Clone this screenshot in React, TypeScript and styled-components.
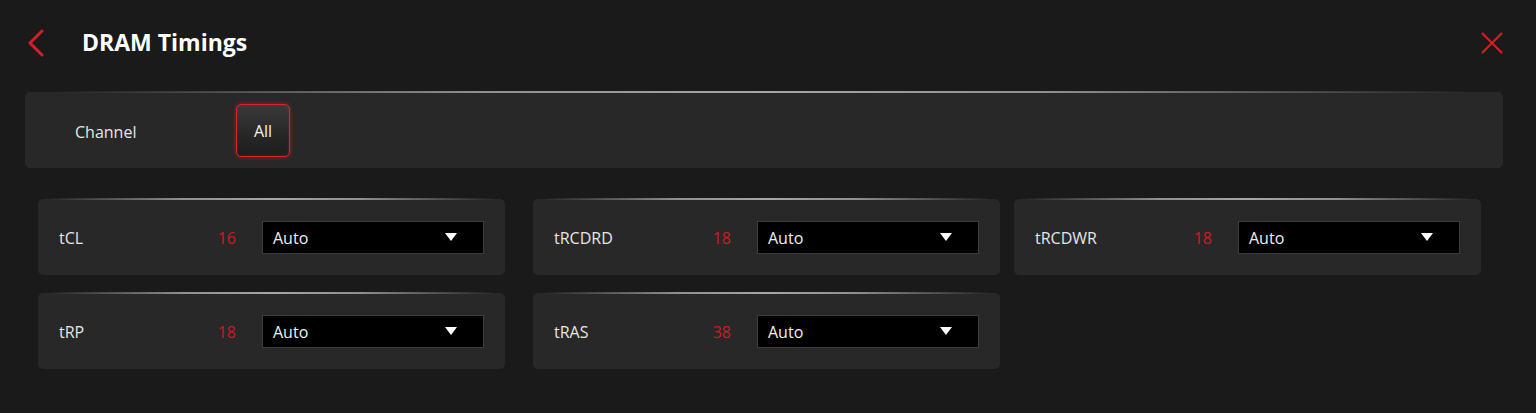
import * as React from "react";
import styled, { createGlobalStyle } from "styled-components";

const GlobalStyle = createGlobalStyle`
	html, body {
		margin: 0;
		padding: 0;
		background: #1a1a1a;
	}
	body {
		font-family: "Open Sans", "Noto Sans", sans-serif;
		color: #ececec;
	}
`;

const timings = [
	[
		{ name: "tCL", value: 16 },
		{ name: "tRCDRD", value: 18 },
		{ name: "tRCDWR", value: 18 },
	],
	[
		{ name: "tRP", value: 18 },
		{ name: "tRAS", value: 38 },
	],
];

const Page = styled.div`
	min-height: 413px;
	background: #1a1a1a;
	display: flex;
	flex-direction: column;
`;

const Header = styled.header`
	height: 86px;
	display: flex;
	align-items: center;
	padding: 0 33px 0 27px;
`;

const IconButton = styled.button`
	background: none;
	border: 0;
	padding: 0;
	display: flex;
	cursor: pointer;
`;

const Title = styled.h1`
	flex: 1;
	margin: 0 0 2px 38px;
	font-size: 23px;
	font-weight: 700;
	color: #fff;
`;

// thin glossy line running across the top edge of a panel
const Panel = styled.section`
	position: relative;
	background: #282828;
	border-radius: 5px;
	display: flex;
	align-items: center;
	&::before {
		content: "";
		position: absolute;
		top: -1px;
		left: 2%;
		right: 2%;
		height: 2px;
		background: linear-gradient(90deg, rgba(150,150,150,0) 0%, rgba(190,190,190,0.7) 30%, rgba(200,200,200,0.8) 50%, rgba(190,190,190,0.7) 70%, rgba(150,150,150,0) 100%);
	}
`;

const ChannelBar = styled(Panel)`
	height: 76px;
	margin: 6px 33px 0 25px;
	padding-left: 50px;
`;

const ChannelLabel = styled.span`
	width: 161px;
	padding-top: 3px;
	font-size: 16px;
	color: #e6e6e6;
`;

const ChannelButton = styled.button<{ $active?: boolean }>`
	width: 54px;
	height: 53px;
	padding-top: 2px;
	border-radius: 5px;
	border: 1px solid ${p => (p.$active ? "#d8252b" : "#444")};
	box-shadow: ${p => (p.$active ? "0 0 4px rgba(220,30,40,0.6), inset 0 0 3px rgba(220,30,40,0.4)" : "none")};
	background: linear-gradient(180deg, #3a3a3a 0%, #262626 60%, #1e1e1e 100%);
	color: #f2f2f2;
	font-family: inherit;
	font-size: 16px;
	cursor: pointer;
`;

const Grid = styled.div`
	margin-top: 31px;
	padding-left: 38px;
	display: grid;
	grid-template-columns: 495px 481px 466px;
	row-gap: 18px;
`;

const Card = styled(Panel)`
	width: 467px;
	height: 76px;
	padding-left: 21px;
	box-sizing: border-box;
`;

const Name = styled.span`
	width: 120px;
	padding-top: 2px;
	font-size: 16px;
	color: #e6e6e6;
`;

const Value = styled.span`
	width: 57px;
	padding-top: 2px;
	text-align: right;
	font-size: 16px;
	color: #c81d22;
`;

const Select = styled.div`
	margin-left: 26px;
	width: 222px;
	height: 33px;
	box-sizing: border-box;
	background: #000;
	border: 1px solid #3c3c3c;
	display: flex;
	align-items: center;
	justify-content: space-between;
	padding: 2px 26px 0 10px;
	font-size: 16px;
	color: #f0f0f0;
	cursor: pointer;
`;

const Caret = styled.span`
	width: 0;
	height: 0;
	margin-bottom: 2px;
	border-left: 6.5px solid transparent;
	border-right: 6.5px solid transparent;
	border-top: 8px solid #fff;
`;

function BackIcon() {
	return (
		<svg width="17" height="28" viewBox="0 0 17 28">
			<path d="M15 2 L3 14 L15 26" fill="none" stroke="#d81e24" strokeWidth="3" strokeLinecap="round" strokeLinejoin="round" />
		</svg>
	);
}

function CloseIcon() {
	return (
		<svg width="22" height="22" viewBox="0 0 22 22">
			<path d="M1 1 L21 21 M21 1 L1 21" fill="none" stroke="#d81e24" strokeWidth="2.2" />
		</svg>
	);
}

function TimingCard({ name, value }: { name: string; value: number }) {
	return (
		<Card>
			<Name>{name}</Name>
			<Value>{value}</Value>
			<Select>
				<span>Auto</span>
				<Caret />
			</Select>
		</Card>
	);
}

export default function App() {
	return (
		<>
			<GlobalStyle />
			<Page>
				<Header>
					<IconButton aria-label="Back"><BackIcon /></IconButton>
					<Title>DRAM Timings</Title>
					<IconButton aria-label="Close"><CloseIcon /></IconButton>
				</Header>
				<ChannelBar>
					<ChannelLabel>Channel</ChannelLabel>
					<ChannelButton $active>All</ChannelButton>
				</ChannelBar>
				<Grid>
					{timings.flat().map(t => (
						<TimingCard key={t.name} name={t.name} value={t.value} />
					))}
				</Grid>
			</Page>
		</>
	);
}
